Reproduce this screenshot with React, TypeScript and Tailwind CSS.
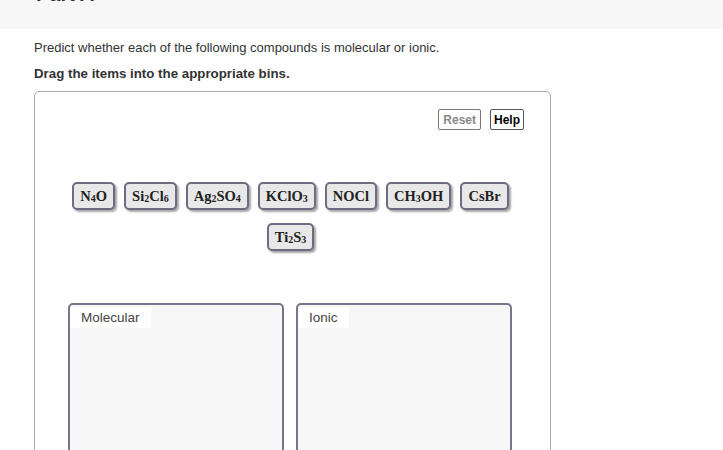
import type { ReactNode } from 'react';

type Chip = { key: string; label: ReactNode };

const sub = (s: string) => <sub className="text-[10px] align-[-2px] leading-none">{s}</sub>;

const chips: Chip[] = [
  { key: 'n4o', label: <>N{sub('4')}O</> },
  { key: 'si2cl6', label: <>Si{sub('2')}Cl{sub('6')}</> },
  { key: 'ag2so4', label: <>Ag{sub('2')}SO{sub('4')}</> },
  { key: 'kclo3', label: <>KClO{sub('3')}</> },
  { key: 'nocl', label: <>NOCl</> },
  { key: 'ch3oh', label: <>CH{sub('3')}OH</> },
  { key: 'csbr', label: <>CsBr</> },
  { key: 'ti2s3', label: <>Ti{sub('2')}S{sub('3')}</> },
];

function ChipItem({ label }: { label: ReactNode }) {
  return (
    <div className="h-[28px] px-[6px] flex items-center bg-[#e8e8e8] border-2 border-[#6e6c80] rounded-[5px] shadow-[2px_2px_2px_rgba(0,0,0,0.35)] font-['Liberation_Serif',serif] font-bold text-[14.5px] text-[#222] leading-none">
      {label}
    </div>
  );
}

function Bin({ title }: { title: string }) {
  return (
    <div className="w-[216px] h-[160px] border-2 border-[#77758a] rounded-t-[5px] bg-[#f7f7f7]">
      <div className="inline-block bg-white px-[11px] pt-[3px] pb-[2px] text-[13.5px] text-[#444] leading-[16px]">
        {title}
      </div>
    </div>
  );
}

export default function App() {
  return (
    <div className="w-[723px] h-[450px] overflow-hidden bg-white font-['Liberation_Sans',Arial,sans-serif]">
      <div className="h-[29px] bg-[#f7f7f7] overflow-hidden">
        <div className="pl-[36px] -mt-[16px] text-[20px] font-bold text-[#333] leading-[20px]">Part A</div>
      </div>
      <div className="pl-[34px]">
        <p className="mt-[11px] text-[13px] text-[#333] leading-[16px]">
          Predict whether each of the following compounds is molecular or ionic.
        </p>
        <p className="mt-[10px] text-[13.3px] font-bold text-[#333] leading-[16px]">
          Drag the items into the appropriate bins.
        </p>
        <div className="mt-[9px] w-[517px] h-[400px] border border-[#aaa] rounded-[5px]">
          <div className="flex justify-end gap-[9px] pr-[26px] pt-[17px]">
            <button className="h-[21px] px-[4px] border border-[#777] rounded-[2px] text-[12px] font-bold text-[#888] leading-none">
              Reset
            </button>
            <button className="h-[21px] px-[3px] border border-[#555] rounded-[2px] text-[12px] font-bold text-black leading-none">
              Help
            </button>
          </div>
          <div className="mt-[52px] pl-[20px] pr-[24px] flex flex-wrap justify-center gap-x-[9px] gap-y-[13px]">
            {chips.map((c) => (
              <ChipItem key={c.key} label={c.label} />
            ))}
          </div>
          <div className="mt-[52px] pl-[33px] flex gap-[12px]">
            <Bin title="Molecular" />
            <Bin title="Ionic" />
          </div>
        </div>
      </div>
    </div>
  );
}
